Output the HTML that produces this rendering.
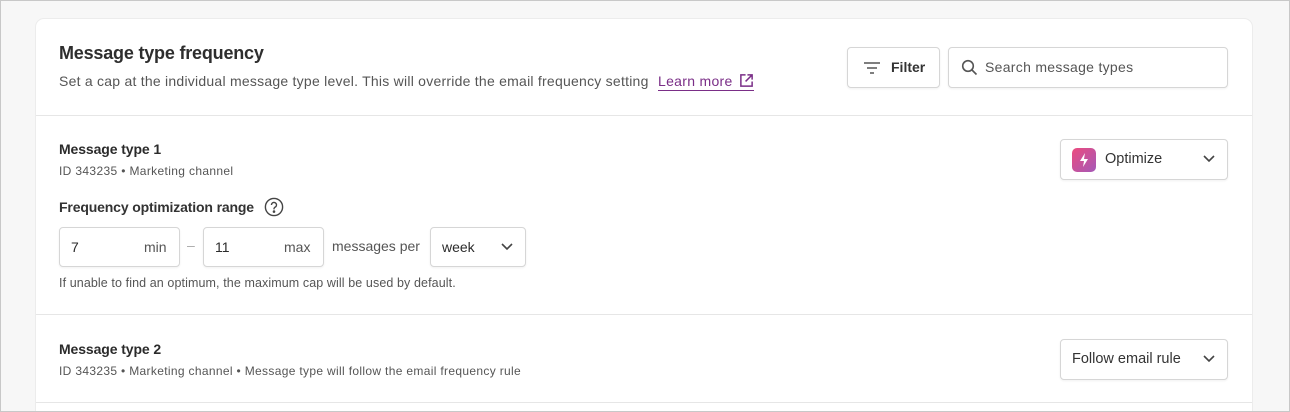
<!DOCTYPE html><html style="overflow:hidden;height:412px"><head><style>
*{box-sizing:border-box;margin:0;padding:0}
body{width:1290px;height:412px;overflow:hidden;background:#f7f7f7;font-family:"Liberation Sans",sans-serif;color:#2b2b2b;position:relative}
.frame{position:absolute;left:0;top:0;width:1290px;height:412px;border:1px solid #c8c8c8;z-index:5;pointer-events:none}
.card{position:absolute;left:36px;top:19px;width:1216px;height:392px;background:#fff;border-radius:8px 8px 0 0;box-shadow:0 0 0 1px #ececec}
.a{position:absolute;white-space:nowrap}
.hr{position:absolute;left:0;width:1216px;height:1px;background:#e6e6e6}
.box{position:absolute;border:1px solid #d6d6d6;border-radius:4px;background:#fff;box-shadow:0 1px 2px rgba(0,0,0,.06)}
.g{color:#555}
</style></head><body>
<div class="frame"></div>
<div class="card">
 <div class="a" style="left:23px;top:24px;font-size:18px;font-weight:bold;color:#2e2e2e;letter-spacing:-0.2px">Message type frequency</div>
 <div class="a g" style="left:23px;top:54px;font-size:14px;letter-spacing:0.24px">Set a cap at the individual message type level. This will override the email frequency setting</div>
 <div class="a" style="left:622px;top:54px;font-size:14px;color:#7a2e87;border-bottom:1.5px solid #7a2e87;padding-bottom:1px;letter-spacing:0.3px">Learn more
  <svg width="15" height="15" viewBox="0 0 16 16" style="vertical-align:-2px;margin-left:2px" fill="none" stroke="#7a2e87" stroke-width="1.6"><path d="M7 2H2v12h12V9M9 2h5v5M14 2L7 9"/></svg></div>
 <div class="box" style="left:811px;top:28px;width:93px;height:41px">
  <svg class="a" style="left:15px;top:12px" width="18" height="16" viewBox="0 0 18 16" stroke="#555" stroke-width="1.5"><path d="M1 3h16M4 8h10M7 13h4"/></svg>
  <div class="a" style="left:43px;top:11px;font-size:14px;font-weight:bold;color:#333">Filter</div></div>
 <div class="box" style="left:912px;top:28px;width:280px;height:41px">
  <svg class="a" style="left:12px;top:11px" width="17" height="17" viewBox="0 0 17 17" fill="none" stroke="#555" stroke-width="1.6"><circle cx="7" cy="7" r="5.3"/><path d="M11 11l4.5 4.5"/></svg>
  <div class="a" style="left:36px;top:11px;font-size:14px;color:#555;letter-spacing:0.3px">Search message types</div></div>
 <div class="hr" style="top:96px"></div>
 <div class="a" style="left:23px;top:122px;font-size:14px;font-weight:bold;letter-spacing:-0.1px">Message type 1</div>
 <div class="a g" style="left:23px;top:145px;font-size:12px;letter-spacing:0.35px">ID 343235 &bull; Marketing channel</div>
 <div class="box" style="left:1024px;top:120px;width:168px;height:41px">
  <div class="a" style="left:11px;top:8px;width:24px;height:24px;border-radius:5px;background:linear-gradient(135deg,#ec4b7e,#a459b8)">
   <svg width="24" height="24" viewBox="0 0 24 24"><path d="M13 5l-5 8h4l-1 6 5-8h-4z" fill="#fff"/></svg></div>
  <div class="a" style="left:44px;top:11px;font-size:14.5px;color:#333">Optimize</div>
  <svg class="a" style="left:142px;top:15px" width="12" height="8" viewBox="0 0 12 8" fill="none" stroke="#444" stroke-width="1.6"><path d="M1 1l5 5 5-5"/></svg></div>
 <div class="a" style="left:23px;top:180px;font-size:14px;font-weight:bold;color:#333;letter-spacing:-0.15px">Frequency optimization range</div>
 <svg class="a" style="left:228px;top:178px" width="20" height="20" viewBox="0 0 20 20" fill="none" stroke="#444" stroke-width="1.4"><circle cx="10" cy="10" r="8.6"/><path d="M7.5 8a2.5 2.5 0 1 1 3.5 2.2c-.7.4-1 .8-1 1.6v.6"/><circle cx="10" cy="14.6" r=".6" fill="#444"/></svg>
 <div class="box" style="left:23px;top:208px;width:121px;height:40px"><div class="a" style="left:11px;top:11px;font-size:14px">7</div><div class="a g" style="left:84px;top:11px;font-size:14px">min</div></div>
 <div class="a" style="left:151px;top:218px;font-size:14px;color:#aaa">–</div>
 <div class="box" style="left:167px;top:208px;width:121px;height:40px"><div class="a" style="left:11px;top:11px;font-size:14px">11</div><div class="a g" style="left:80px;top:11px;font-size:14px">max</div></div>
 <div class="a g" style="left:296px;top:219px;font-size:14px">messages per</div>
 <div class="box" style="left:394px;top:208px;width:96px;height:40px"><div class="a" style="left:11px;top:11px;font-size:14px">week</div>
  <svg class="a" style="left:70px;top:15px" width="12" height="8" viewBox="0 0 12 8" fill="none" stroke="#444" stroke-width="1.6"><path d="M1 1l5 5 5-5"/></svg></div>
 <div class="a g" style="left:23px;top:257px;font-size:12.5px;letter-spacing:0.1px">If unable to find an optimum, the maximum cap will be used by default.</div>
 <div class="hr" style="top:295px"></div>
 <div class="a" style="left:23px;top:322px;font-size:14px;font-weight:bold;letter-spacing:-0.1px">Message type 2</div>
 <div class="a g" style="left:23px;top:345px;font-size:12px;letter-spacing:0.33px">ID 343235 &bull; Marketing channel &bull; Message type will follow the email frequency rule</div>
 <div class="box" style="left:1024px;top:320px;width:168px;height:41px">
  <div class="a" style="left:11px;top:11px;font-size:14.5px;color:#333">Follow email rule</div>
  <svg class="a" style="left:142px;top:15px" width="12" height="8" viewBox="0 0 12 8" fill="none" stroke="#444" stroke-width="1.6"><path d="M1 1l5 5 5-5"/></svg></div>
 <div class="hr" style="top:383px"></div>
</div>
</body></html>
